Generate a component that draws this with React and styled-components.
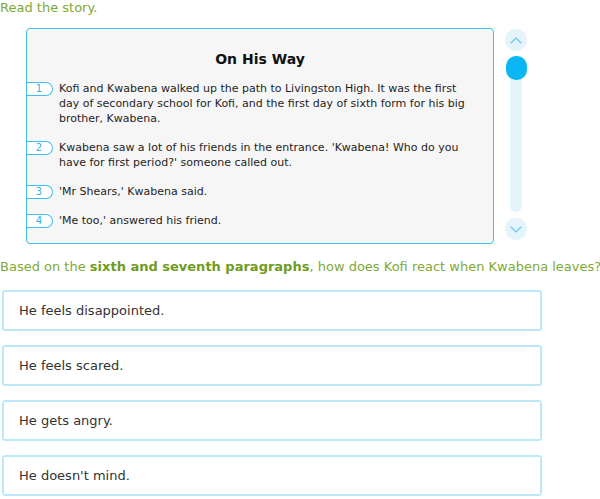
import styled, { createGlobalStyle } from "styled-components"

const GlobalStyle = createGlobalStyle`
    body {
        margin: 0;
        background: #fff;
        font-family: "DejaVu Sans", Verdana, sans-serif;
    }
`

const paragraphs = [
    "Kofi and Kwabena walked up the path to Livingston High. It was the first day of secondary school for Kofi, and the first day of sixth form for his big brother, Kwabena.",
    "Kwabena saw a lot of his friends in the entrance. 'Kwabena! Who do you have for first period?' someone called out.",
    "'Mr Shears,' Kwabena said.",
    "'Me too,' answered his friend.",
]

const answers = [
    "He feels disappointed.",
    "He feels scared.",
    "He gets angry.",
    "He doesn't mind.",
]

const Chevron = ({ down }) => (
    <svg width="12" height="7" viewBox="0 0 12 7">
        <path
            d={down ? "M1 1 L6 6 L11 1" : "M1 6 L6 1 L11 6"}
            fill="none"
            stroke="#6cc7f0"
            strokeWidth="1.2"
            strokeLinecap="round"
            strokeLinejoin="round"
        />
    </svg>
)

const App = () => {
    return (
        <>
            <GlobalStyle />
            <StPage>
                <StPrompt>Read the story.</StPrompt>
                <StStoryRow>
                    <StStoryBox>
                        <StTitle>On His Way</StTitle>
                        {paragraphs.map((text, i) => (
                            <StParagraph key={i}>
                                <StNumberTab>{i + 1}</StNumberTab>
                                {text}
                            </StParagraph>
                        ))}
                    </StStoryBox>
                    <StScrollColumn>
                        <StScrollButton><Chevron /></StScrollButton>
                        <StScrollTrack>
                            <StScrollThumb />
                        </StScrollTrack>
                        <StScrollButton><Chevron down /></StScrollButton>
                    </StScrollColumn>
                </StStoryRow>
                <StQuestion>
                    Based on the <b>sixth and seventh paragraphs</b>, how does Kofi react when Kwabena leaves?
                </StQuestion>
                <StAnswerList>
                    {answers.map((a) => (
                        <StAnswer key={a}>{a}</StAnswer>
                    ))}
                </StAnswerList>
            </StPage>
        </>
    )
}

export default App

const StPage = styled.div`
    width: 600px;
    height: 499px;
    overflow: hidden;
`
const StPrompt = styled.div`
    color: #80aa34;
    font-size: 13px;
    line-height: 16px;
`
const StStoryRow = styled.div`
    display: flex;
    align-items: flex-start;
    gap: 11px;
    margin: 12px 0 0 26px;
`
const StStoryBox = styled.div`
    box-sizing: border-box;
    width: 468px;
    height: 216px;
    overflow: hidden;
    background: #f6f6f6;
    border: 1px solid #3fc0f0;
    border-radius: 4px;
    padding: 22px 16px 0 32px;
    color: #1e1e1e;
`
const StTitle = styled.div`
    text-align: center;
    font-size: 14px;
    font-weight: bold;
    line-height: 16px;
    color: #111;
    margin: 0 0 14px -16px;
`
const StParagraph = styled.p`
    position: relative;
    margin: 0 0 14px;
    font-size: 11px;
    line-height: 15px;
`
const StNumberTab = styled.span`
    position: absolute;
    left: -33px;
    top: 1px;
    box-sizing: border-box;
    width: 27px;
    height: 14px;
    background: #fff;
    border: 1px solid #3fc0f0;
    border-left: none;
    border-radius: 0 8px 8px 0;
    color: #2fb2e8;
    font-size: 10px;
    line-height: 12px;
    text-align: center;
`
const StScrollColumn = styled.div`
    display: flex;
    flex-direction: column;
    align-items: center;
    gap: 5px;
    width: 22px;
    margin-top: 1px;
`
const StScrollButton = styled.div`
    display: flex;
    align-items: center;
    justify-content: center;
    width: 22px;
    height: 22px;
    border-radius: 50%;
    background: #e5f4fb;
`
const StScrollTrack = styled.div`
    display: flex;
    justify-content: center;
    width: 12px;
    height: 156px;
    border-radius: 6px;
    background: #e5f4fb;
    margin-bottom: 1px;
`
const StScrollThumb = styled.div`
    flex: none;
    width: 21px;
    height: 24px;
    border-radius: 10px;
    background: #0cb6f4;
`
const StQuestion = styled.div`
    margin-top: 15px;
    color: #80aa34;
    font-size: 13px;
    line-height: 16px;
    white-space: nowrap;

    b {
        color: #6f9c20;
    }
`
const StAnswerList = styled.div`
    display: flex;
    flex-direction: column;
    gap: 14px;
    margin: 15px 0 0 2px;
`
const StAnswer = styled.div`
    box-sizing: border-box;
    width: 540px;
    height: 41px;
    display: flex;
    align-items: center;
    padding-left: 15px;
    border: 2px solid #bde8f9;
    border-radius: 3px;
    color: #333;
    font-size: 13px;
`
